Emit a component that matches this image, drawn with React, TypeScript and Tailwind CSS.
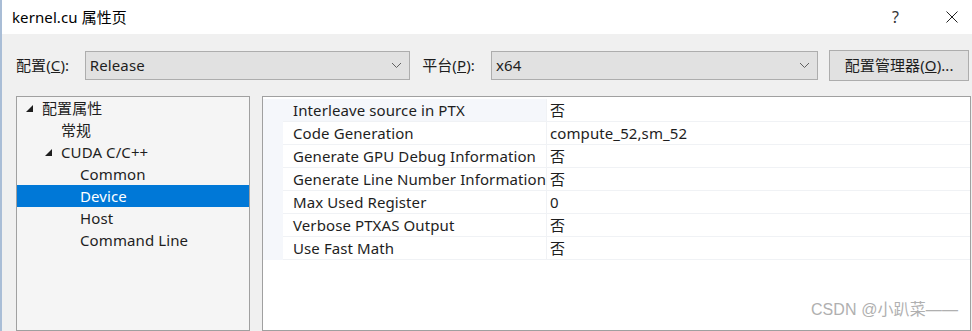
import React from "react";

const font = { fontFamily: '"Noto Sans", "Noto Sans CJK SC", sans-serif' };

function Chevron() {
  return (
    <svg width="11" height="7" viewBox="0 0 11 7" className="text-[#606060]">
      <path d="M1 1 L5.5 5.5 L10 1" fill="none" stroke="currentColor" strokeWidth="1" />
    </svg>
  );
}

function Triangle() {
  return (
    <svg width="7" height="7" viewBox="0 0 7 7">
      <path d="M7 0 L7 7 L0 7 Z" fill="#1e1e1e" />
    </svg>
  );
}

const tree = [
  { label: "配置属性", indent: 0, arrow: true },
  { label: "常规", indent: 1, arrow: false },
  { label: "CUDA C/C++", indent: 1, arrow: true },
  { label: "Common", indent: 2, arrow: false },
  { label: "Device", indent: 2, arrow: false, selected: true },
  { label: "Host", indent: 2, arrow: false },
  { label: "Command Line", indent: 2, arrow: false },
];

const props = [
  ["Interleave source in PTX", "否"],
  ["Code Generation", "compute_52,sm_52"],
  ["Generate GPU Debug Information", "否"],
  ["Generate Line Number Information", "否"],
  ["Max Used Register", "0"],
  ["Verbose PTXAS Output", "否"],
  ["Use Fast Math", "否"],
];

export default function App() {
  return (
    <div
      className="relative flex h-[331px] w-[972px] flex-col overflow-hidden border-l-2 border-[#a9bdd6] bg-[#f0f0f0] text-[15px] tracking-[0.1px] text-[#1e1e1e]"
      style={font}
    >
      {/* Title bar */}
      <div className="flex h-[34px] shrink-0 items-center bg-white pl-[10px]">
        <span className="text-[15px] text-black">kernel.cu 属性页</span>
        <span className="ml-auto mr-[47px] text-[16px] text-[#333]">?</span>
        <svg width="12" height="12" viewBox="0 0 12 12" className="mr-[14px]">
          <path d="M0.5 0.5 L11.5 11.5 M11.5 0.5 L0.5 11.5" stroke="#222" strokeWidth="1" />
        </svg>
      </div>

      {/* Config row */}
      <div className="flex h-[62px] shrink-0 items-center pl-[14px] pr-[3px]">
        <span className="w-[69px]">
          配置(<span className="underline">C</span>):
        </span>
        <div className="flex h-[29px] w-[326px] items-center border border-[#adadad] bg-[#e1e1e1] pl-[4px] pr-[7px]">
          <span>Release</span>
          <span className="ml-auto">
            <Chevron />
          </span>
        </div>
        <span className="ml-[12px] w-[69px]">
          平台(<span className="underline">P</span>):
        </span>
        <div className="flex h-[29px] w-[328px] items-center border border-[#adadad] bg-[#e1e1e1] pl-[4px] pr-[7px]">
          <span>x64</span>
          <span className="ml-auto">
            <Chevron />
          </span>
        </div>
        <div className="ml-[11px] flex h-[31px] w-[140px] items-center justify-center border border-[#adadad] bg-[#e1e1e1]">
          配置管理器(<span className="underline">O</span>)...
        </div>
      </div>

      {/* Panels */}
      <div className="flex flex-1 gap-[12px] pl-[14px] pr-[1px]">
        <div className="w-[234px] border border-[#a0a0a0] bg-[#f5f5f5]">
          {tree.map((t) => (
            <div
              key={t.label}
              className={`flex h-[22px] items-center px-[1px] ${t.selected ? "bg-[#0078d7] text-white" : ""}`}
            >
              <div
                className="flex items-center"
                style={{ paddingLeft: 8 + t.indent * 19 }}
              >
                <span className="flex w-[16px] items-center">{t.arrow && <Triangle />}</span>
                <span>{t.label}</span>
              </div>
            </div>
          ))}
        </div>

        <div className="flex-1 border border-[#a0a0a0] bg-white pt-[2px]">
          {props.map(([k, v], i) => (
            <div key={k} className="flex h-[23px]">
              <div className="w-[20px] shrink-0 bg-[#f5f7fb]" />
              <div
                className={`flex w-[264px] shrink-0 items-center overflow-hidden whitespace-nowrap border-b border-r border-[#f0f2f5] pl-[10px] ${i === 0 ? "bg-[#f5f7fb]" : "bg-white"}`}
              >
                {k}
              </div>
              <div className="flex flex-1 items-center border-b border-[#f0f2f5] pl-[3px]">{v}</div>
            </div>
          ))}
        </div>
      </div>

      {/* Watermark */}
      <div
        className="absolute bottom-[9px] right-[14px] text-[16px] text-[#b0b0b0]"
        style={{ fontFamily: '"Liberation Sans", "Noto Sans CJK SC", sans-serif' }}
      >
        CSDN @小趴菜——
      </div>
    </div>
  );
}
